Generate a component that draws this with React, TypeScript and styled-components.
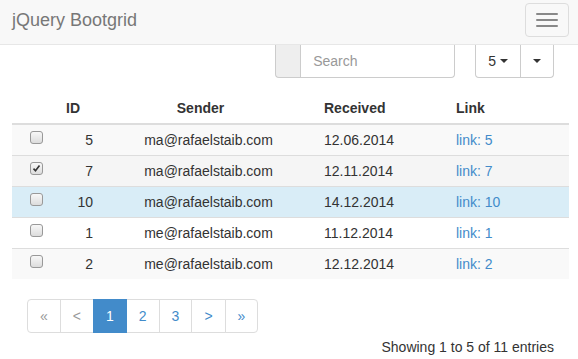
import React from "react";
import styled, { createGlobalStyle } from "styled-components";

const GlobalStyle = createGlobalStyle`
  html, body { margin: 0; padding: 0; background: #fff; }
  body {
    font-family: "Liberation Sans", Arial, Helvetica, sans-serif;
    font-size: 14px;
    line-height: 20px;
    color: #333;
  }
  * { box-sizing: border-box; }
`;

const Navbar = styled.nav`
  height: 45px;
  background: #f8f8f8;
  border-bottom: 1px solid #e7e7e7;
  display: flex;
  align-items: flex-start;
  justify-content: space-between;
  padding: 0 9px 0 12px;
`;

const Brand = styled.a`
  margin-top: 10px;
  font-size: 18px;
  line-height: 20px;
  color: #777;
  text-decoration: none;
`;

const Toggle = styled.button`
  margin-top: 3px;
  width: 44px;
  height: 34px;
  padding: 9px 10px;
  background: transparent;
  border: 1px solid #ddd;
  border-radius: 4px;
  display: flex;
  flex-direction: column;
  gap: 4px;
`;

const Bar = styled.span`
  display: block;
  width: 22px;
  height: 2px;
  border-radius: 1px;
  background: #888;
`;

const Main = styled.main`
  padding: 0 9px 0 12px;
`;

const Toolbar = styled.div`
  display: flex;
  justify-content: flex-end;
  padding: 0 15px;
  margin-bottom: 12px;
`;

const SearchGroup = styled.div`
  display: flex;
  width: 180px;
  height: 33px;
  margin-right: 20px;
`;

const Addon = styled.span`
  width: 25px;
  background: #eee;
  border: 1px solid #ccc;
  border-top: 0;
  border-right: 0;
  border-radius: 0 0 0 4px;
`;

const SearchInput = styled.input`
  flex: 1;
  min-width: 0;
  height: 33px;
  padding: 6px 12px;
  border: 1px solid #ccc;
  border-top: 0;
  border-radius: 0 0 4px 0;
  font: inherit;
  color: #555;
  outline: none;
  &::placeholder { color: #999; }
`;

const BtnGroup = styled.div`
  display: flex;
  height: 33px;
`;

const DropBtn = styled.button<{ $first?: boolean }>`
  display: flex;
  align-items: center;
  padding: 6px 12px;
  margin-left: ${(p) => (p.$first ? "0" : "-1px")};
  background: #fff;
  border: 1px solid #ccc;
  border-top: 0;
  border-radius: ${(p) => (p.$first ? "0 0 0 4px" : "0 0 4px 0")};
  font: inherit;
  color: #333;
  gap: 4px;
`;

const Caret = styled.span`
  display: inline-block;
  width: 0;
  height: 0;
  border-top: 4px solid #333;
  border-left: 4px solid transparent;
  border-right: 4px solid transparent;
`;

const Table = styled.table`
  width: 100%;
  table-layout: fixed;
  border-collapse: collapse;
  border-spacing: 0;
`;

const Th = styled.th<{ $align: string }>`
  padding: 8px 8px 5px;
  text-align: ${(p) => p.$align};
  font-weight: bold;
  border-bottom: 2px solid #ddd;
  vertical-align: bottom;
`;

const HeaderText = styled.span`
  display: block;
  margin-right: 16px;
  white-space: nowrap;
`;

const Row = styled.tr<{ $bg: string }>`
  background: ${(p) => p.$bg};
`;

const Td = styled.td<{ $align: string }>`
  padding: 5px 8px;
  border-top: 1px solid #ddd;
  text-align: ${(p) => p.$align};
  white-space: nowrap;
`;

const CheckBox = styled.span`
  display: inline-flex;
  align-items: center;
  justify-content: center;
  vertical-align: top;
  width: 13px;
  height: 13px;
  margin: 1px 0 0 3px;
  border: 1px solid #999;
  border-radius: 3px;
  background: linear-gradient(#f8f8f8, #dcdcdc);
`;

const Link = styled.a`
  color: #428bca;
  text-decoration: none;
`;

const Footer = styled.div`
  padding: 0 15px;
`;

const Pagination = styled.ul`
  display: flex;
  list-style: none;
  margin: 20px 0 4px;
  padding: 0;
`;

const PageItem = styled.li<{ $state: "disabled" | "active" | "normal" }>`
  padding: 6px 12px;
  margin-left: -1px;
  border: 1px solid ${(p) => (p.$state === "active" ? "#428bca" : "#ddd")};
  background: ${(p) => (p.$state === "active" ? "#428bca" : "#fff")};
  color: ${(p) =>
    p.$state === "active" ? "#fff" : p.$state === "disabled" ? "#999" : "#428bca"};
  position: relative;
  z-index: ${(p) => (p.$state === "active" ? 2 : 1)};
  &:first-child {
    margin-left: 0;
    border-radius: 4px 0 0 4px;
  }
  &:last-child {
    border-radius: 0 4px 4px 0;
  }
`;

const Infos = styled.div`
  text-align: right;
`;

const rows = [
  { id: 5, sender: "ma@rafaelstaib.com", received: "12.06.2014", bg: "#f9f9f9", checked: false },
  { id: 7, sender: "ma@rafaelstaib.com", received: "12.11.2014", bg: "#f5f5f5", checked: true },
  { id: 10, sender: "ma@rafaelstaib.com", received: "14.12.2014", bg: "#d9edf7", checked: false },
  { id: 1, sender: "me@rafaelstaib.com", received: "11.12.2014", bg: "#fff", checked: false },
  { id: 2, sender: "me@rafaelstaib.com", received: "12.12.2014", bg: "#f9f9f9", checked: false },
];

const pages: { label: string; state: "disabled" | "active" | "normal" }[] = [
  { label: "«", state: "disabled" },
  { label: "<", state: "disabled" },
  { label: "1", state: "active" },
  { label: "2", state: "normal" },
  { label: "3", state: "normal" },
  { label: ">", state: "normal" },
  { label: "»", state: "normal" },
];

export default function App() {
  return (
    <>
      <GlobalStyle />
      <Navbar>
        <Brand href="#">jQuery Bootgrid</Brand>
        <Toggle aria-label="Toggle navigation">
          <Bar />
          <Bar />
          <Bar />
        </Toggle>
      </Navbar>
      <Main>
        <Toolbar>
          <SearchGroup>
            <Addon />
            <SearchInput placeholder="Search" />
          </SearchGroup>
          <BtnGroup>
            <DropBtn $first>
              <span>5</span>
              <Caret />
            </DropBtn>
            <DropBtn>
              <Caret />
            </DropBtn>
          </BtnGroup>
        </Toolbar>
        <Table>
          <colgroup>
            <col style={{ width: 46 }} />
            <col style={{ width: 43 }} />
            <col style={{ width: 215 }} />
            <col style={{ width: 132 }} />
            <col />
          </colgroup>
          <thead>
            <tr>
              <Th $align="center" />
              <Th $align="center">
                <HeaderText>ID</HeaderText>
              </Th>
              <Th $align="center">
                <HeaderText>Sender</HeaderText>
              </Th>
              <Th $align="left">
                <HeaderText>Received</HeaderText>
              </Th>
              <Th $align="left">
                <HeaderText>Link</HeaderText>
              </Th>
            </tr>
          </thead>
          <tbody>
            {rows.map((r) => (
              <Row key={r.id} $bg={r.bg}>
                <Td $align="center">
                  <CheckBox>
                    {r.checked && (
                      <svg width="9" height="9" viewBox="0 0 9 9">
                        <path d="M1.5 4.6 L3.5 6.8 L7.5 1.6" fill="none" stroke="#333" strokeWidth="1.6" />
                      </svg>
                    )}
                  </CheckBox>
                </Td>
                <Td $align="right">{r.id}</Td>
                <Td $align="center">{r.sender}</Td>
                <Td $align="left">{r.received}</Td>
                <Td $align="left">
                  <Link href="#">link: {r.id}</Link>
                </Td>
              </Row>
            ))}
          </tbody>
        </Table>
        <Footer>
          <Pagination>
            {pages.map((p) => (
              <PageItem key={p.label} $state={p.state}>
                {p.label}
              </PageItem>
            ))}
          </Pagination>
          <Infos>Showing 1 to 5 of 11 entries</Infos>
        </Footer>
      </Main>
    </>
  );
}
